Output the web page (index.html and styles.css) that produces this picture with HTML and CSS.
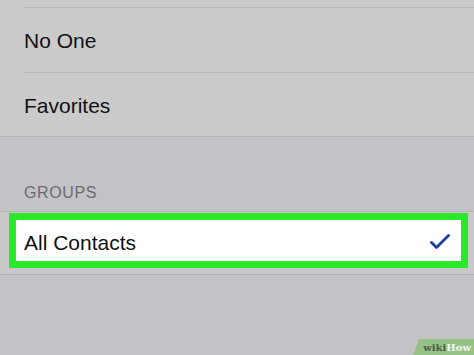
FILE: index.html
```html
<!DOCTYPE html>
<html>
<head>
<meta charset="utf-8">
<link rel="stylesheet" href="styles.css">
</head>
<body>
<div class="screen">
  <section class="group top">
    <div class="cell"><div class="cell-inner h64"><span class="label">No One</span></div></div>
    <div class="cell"><div class="cell-inner h63"><span class="label">Favorites</span></div></div>
  </section>
  <div class="header">GROUPS</div>
  <section class="group selected">
    <div class="highlight">
      <span class="label">All Contacts</span>
      <svg class="check" width="20" height="16" viewBox="0 0 20 16">
        <path d="M1.5 8.5 L6.5 13.5 L18.5 1.5" fill="none" stroke="#1c3c9c" stroke-width="2.8" stroke-linecap="round" stroke-linejoin="round"/>
      </svg>
    </div>
  </section>
  <div class="badge"><span class="wiki">wiki</span><span class="how">How</span></div>
</div>
</body>
</html>
```
FILE: styles.css
```css
html, body {
  margin: 0;
  padding: 0;
}
body {
  background: #c3c2c7;
  font-family: "Liberation Sans", Arial, sans-serif;
}
.screen {
  position: relative;
  width: 474px;
  height: 355px;
  overflow: hidden;
  background: #c3c2c7;
}
.group.top {
  background: #cbcbcb;
  padding-top: 7px;
  border-bottom: 1px solid #b4b4b6;
}
.cell {
  padding-left: 24px;
}
.cell-inner {
  border-top: 1px solid #b9b9b9;
  display: flex;
  align-items: center;
  padding-top: 2px;
  box-sizing: border-box;
}
.h64 { height: 65px; }
.h63 { height: 64px; }
.label {
  font-size: 21px;
  line-height: 24px;
  color: #111;
}
.header {
  padding: 47px 0 9px 24px;
  font-size: 16px;
  line-height: 18px;
  letter-spacing: 0.6px;
  color: #6c6c70;
  border-bottom: 1px solid #b4b4b6;
}
.group.selected {
  background: #c9c9c9;
  padding: 1px 6px 6px 9px;
  border-bottom: 1px solid #b4b4b6;
}
.highlight {
  border: 7px solid #2ae82a;
  background: #ffffff;
  display: flex;
  align-items: flex-start;
  justify-content: space-between;
  padding: 11px 11px 0 8px;
  height: 30px;
}
.check {
  margin-top: 3px;
}
.badge {
  position: absolute;
  right: 0;
  bottom: 0;
  height: 16px;
  width: 54px;
  padding-left: 4px;
  padding-right: 3px;
  background: #97c287;
  clip-path: polygon(6px 0, 100% 0, 100% 100%, 0 100%);
  display: flex;
  align-items: center;
  justify-content: flex-end;
  font-family: "DejaVu Serif", "Liberation Serif", serif;
  font-weight: bold;
  font-size: 10px;
}
.wiki { color: #4f5b4a; }
.how { color: #f4f7f2; }
```
